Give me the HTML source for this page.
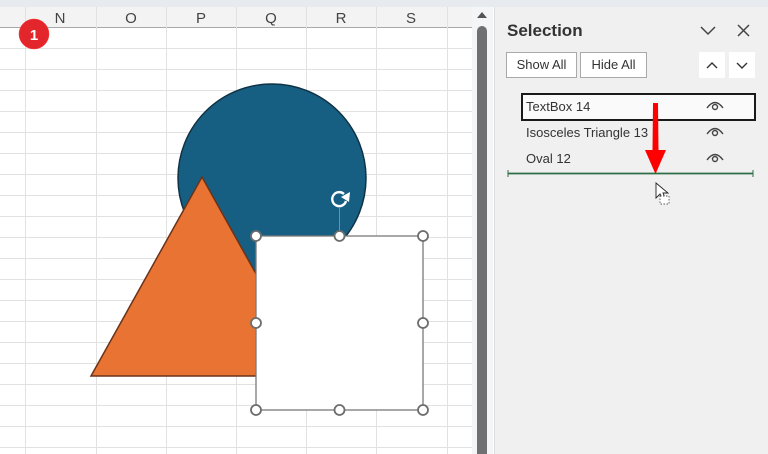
<!DOCTYPE html>
<html><head><style>
body{margin:0;width:768px;height:454px;overflow:hidden;background:#fff;font-family:"Liberation Sans",sans-serif;position:relative}
.a{position:absolute}
</style></head><body>
<div class="a" style="left:0;top:0;width:768px;height:7px;background:#e7eaee"></div>
<svg class="a" style="left:0;top:7px" width="472" height="447">
<rect x="0" y="0" width="472" height="20" fill="#f3f3f3"/>
<line x1="0" y1="20.5" x2="472" y2="20.5" stroke="#a8a8a8"/>
<g stroke="#e1e1e1">
<line x1="25.5" y1="0" x2="25.5" y2="447"/><line x1="96.5" y1="0" x2="96.5" y2="447"/>
<line x1="166.5" y1="0" x2="166.5" y2="447"/><line x1="236.5" y1="0" x2="236.5" y2="447"/>
<line x1="306.5" y1="0" x2="306.5" y2="447"/><line x1="376.5" y1="0" x2="376.5" y2="447"/>
<line x1="447.5" y1="0" x2="447.5" y2="447"/>
<line x1="0" x2="472" y1="41.5" y2="41.5"/><line x1="0" x2="472" y1="62.5" y2="62.5"/><line x1="0" x2="472" y1="83.5" y2="83.5"/><line x1="0" x2="472" y1="104.5" y2="104.5"/><line x1="0" x2="472" y1="125.5" y2="125.5"/><line x1="0" x2="472" y1="146.5" y2="146.5"/><line x1="0" x2="472" y1="167.5" y2="167.5"/><line x1="0" x2="472" y1="188.5" y2="188.5"/><line x1="0" x2="472" y1="209.5" y2="209.5"/><line x1="0" x2="472" y1="230.5" y2="230.5"/><line x1="0" x2="472" y1="251.5" y2="251.5"/><line x1="0" x2="472" y1="272.5" y2="272.5"/><line x1="0" x2="472" y1="293.5" y2="293.5"/><line x1="0" x2="472" y1="314.5" y2="314.5"/><line x1="0" x2="472" y1="335.5" y2="335.5"/><line x1="0" x2="472" y1="356.5" y2="356.5"/><line x1="0" x2="472" y1="377.5" y2="377.5"/><line x1="0" x2="472" y1="398.5" y2="398.5"/><line x1="0" x2="472" y1="419.5" y2="419.5"/><line x1="0" x2="472" y1="440.5" y2="440.5"/>
</g>
<g font-size="15" fill="#444" text-anchor="middle">
<text x="60" y="16">N</text><text x="131" y="16">O</text><text x="201" y="16">P</text><text x="271" y="16">Q</text><text x="341" y="16">R</text><text x="411" y="16">S</text></g>
<g transform="translate(0,-7)">
<circle cx="272" cy="178" r="94" fill="#175f82" stroke="#0f3346" stroke-width="1.5"/>
<polygon points="202,177 91,376 313,376" fill="#e97332" stroke="#6b321a" stroke-width="1.5"/>
<rect x="256" y="236" width="167" height="174" fill="#fff" stroke="#7a7a7a" stroke-width="1.3"/>
<line x1="339.5" y1="208" x2="339.5" y2="236" stroke="#888"/>
<g fill="#fff" stroke="#6d6d6d" stroke-width="1.8">
<circle cx="256" cy="236" r="5"/><circle cx="339.5" cy="236" r="5"/><circle cx="423" cy="236" r="5"/>
<circle cx="256" cy="323" r="5"/><circle cx="423" cy="323" r="5"/>
<circle cx="256" cy="410" r="5"/><circle cx="339.5" cy="410" r="5"/><circle cx="423" cy="410" r="5"/></g>
<path d="M346 201 A7 7 0 1 1 344 194" fill="none" stroke="#fff" stroke-width="2.4"/>
<path d="M341 197 L350 192 L349 202 Z" fill="#fff"/>
<circle cx="34" cy="34" r="15" fill="#e3262b" stroke="#f33" stroke-width="0.5"/>
<text x="34" y="40" font-size="15" font-weight="bold" fill="#fff" text-anchor="middle">1</text>
</g>
</svg>
<div class="a" style="left:472px;top:7px;width:21px;height:447px;background:#f4f5f7"></div>
<div class="a" style="left:477px;top:26px;width:10px;height:428px;background:#707070;border-radius:5px 5px 0 0"></div>
<div class="a" style="left:477px;top:12px;width:0;height:0;border-left:5px solid transparent;border-right:5px solid transparent;border-bottom:6px solid #555"></div>
<div class="a" style="left:494px;top:7px;width:274px;height:447px;background:#f0f0f0;border-left:1px solid #dedede"></div>
<div class="a" style="left:507px;top:21px;font-size:17px;font-weight:bold;color:#333">Selection</div>
<svg class="a" style="left:698px;top:22px" width="60" height="20"><path d="M3 5 L10 12 L17 5" fill="none" stroke="#444" stroke-width="1.5"/><path d="M40 3 L51 14 M51 3 L40 14" stroke="#444" stroke-width="1.5"/></svg>
<div class="a" style="left:506px;top:52px;width:69px;height:24px;border:1px solid #a9a9a9;background:#fff;font-size:13px;color:#333;text-align:center;line-height:24px">Show All</div>
<div class="a" style="left:580px;top:52px;width:65px;height:24px;border:1px solid #a9a9a9;background:#fff;font-size:13px;color:#333;text-align:center;line-height:24px">Hide All</div>
<div class="a" style="left:699px;top:52px;width:26px;height:26px;background:#fff"></div>
<div class="a" style="left:729px;top:52px;width:26px;height:26px;background:#fff"></div>
<svg class="a" style="left:699px;top:52px" width="56" height="26"><path d="M8 16 L13 11 L18 16" fill="none" stroke="#333" stroke-width="1.4"/><path d="M38 11 L43 16 L48 11" fill="none" stroke="#333" stroke-width="1.4"/></svg>
<div class="a" style="left:521px;top:93px;width:231px;height:24px;border:2px solid #1a1a1a;background:#fafafa"></div>
<div class="a" style="left:526px;top:99px;font-size:13px;color:#333">TextBox 14</div>
<div class="a" style="left:526px;top:125px;font-size:13px;color:#333">Isosceles Triangle 13</div>
<div class="a" style="left:526px;top:151px;font-size:13px;color:#333">Oval 12</div>
<svg class="a" style="left:700px;top:95px" width="30" height="80">
<g fill="none" stroke="#444" stroke-width="1.4">
<path d="M7 13 Q15 2 23 13"/><circle cx="15" cy="12" r="2.5"/>
<path d="M7 39 Q15 28 23 39"/><circle cx="15" cy="38" r="2.5"/>
<path d="M7 65 Q15 54 23 65"/><circle cx="15" cy="64" r="2.5"/></g></svg>
<svg class="a" style="left:505px;top:100px" width="255" height="110">
<line x1="3" y1="73.5" x2="248" y2="73.5" stroke="#2e6e47" stroke-width="1.8"/>
<line x1="3" y1="70" x2="3" y2="77" stroke="#2e6e47"/><line x1="248" y1="70" x2="248" y2="77" stroke="#2e6e47"/>
<path d="M148 3 L153 3 L153.5 50 L161 50 L150.5 74 L140 50 L147.5 50 Z" fill="#f00"/>
<path d="M151 83 L151 98 L155 94 L159 101 L161 100 L158 93 L163 93 Z" fill="#fff" stroke="#222" stroke-width="0.9"/>
<rect x="155" y="96" width="9" height="8" fill="#fff" stroke="#555" stroke-dasharray="1.5,1.5" stroke-width="0.9"/>
</svg>
</body></html>
